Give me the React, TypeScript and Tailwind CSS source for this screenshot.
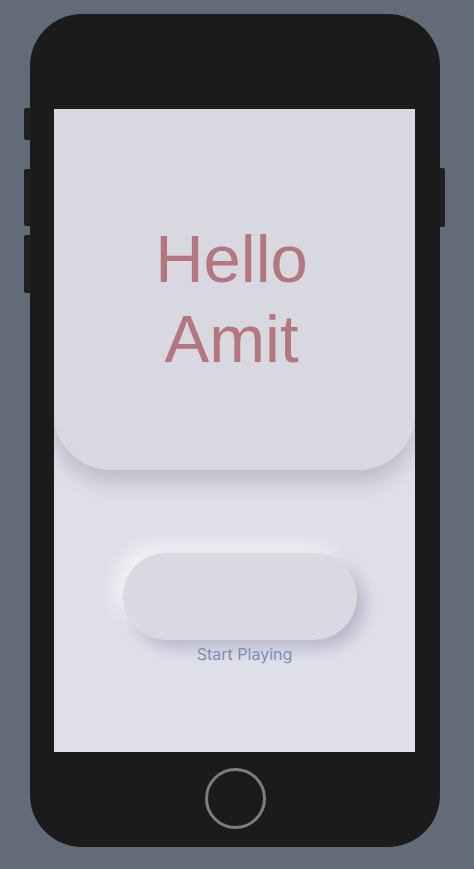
const sideKeys = [
  { top: "top-[94px]", h: "h-[32px]" },
  { top: "top-[155px]", h: "h-[57px]" },
  { top: "top-[221px]", h: "h-[58px]" },
];

const App = () => {
  return (
    <div className="h-[869px] w-full bg-[#626c79] pt-[14px] pl-[30px] overflow-hidden">
      {/* phone body */}
      <div className="relative w-[410px] h-[833px] rounded-[52px] bg-[#1b1b1b] pt-[95px] pl-[24px]">
        {sideKeys.map((k, i) => (
          <div
            key={i}
            className={`absolute -left-[6px] ${k.top} ${k.h} w-[6px] rounded-l-[2px] bg-[#1f1f1f]`}
          />
        ))}
        <div className="absolute -right-[5px] top-[154px] h-[59px] w-[5px] rounded-r-[2px] bg-[#1f1f1f]" />

        {/* screen */}
        <div className="w-[361px] h-[643px] bg-[#e0e0ea] overflow-hidden flex flex-col items-center">
          <div className="w-full h-[361px] shrink-0 bg-[#d8d8e1] rounded-b-[56px] shadow-[0_12px_22px_rgba(140,140,165,0.45)] flex flex-col items-center justify-center pt-[18px] pr-[6px]">
            <span
              className="text-[67px] leading-[80px] text-[#b4767f]"
              style={{ fontFamily: '"Liberation Sans", Arial, sans-serif' }}
            >
              Hello
            </span>
            <span
              className="text-[67px] leading-[80px] text-[#b4767f]"
              style={{ fontFamily: '"Liberation Sans", Arial, sans-serif' }}
            >
              Amit
            </span>
          </div>

          <button className="mt-[83px] translate-x-[5px] w-[234px] h-[87px] shrink-0 rounded-full bg-[#d9d9e1] shadow-[8px_8px_16px_rgba(150,150,175,0.55),-8px_-8px_16px_rgba(255,255,255,0.6)]" />
          <span
            className="mt-[3px] translate-x-[10px] text-[16px] leading-[22px] text-[#7d8db6]"
            style={{ fontFamily: "Inter, Roboto, sans-serif" }}
          >
            Start Playing
          </span>
        </div>

        {/* home button */}
        <div className="mt-[16px] flex justify-center pr-[24px]">
          <div className="w-[61px] h-[61px] rounded-full border-[3px] border-[#7d7d7d]" />
        </div>
      </div>
    </div>
  );
};

export default App;
